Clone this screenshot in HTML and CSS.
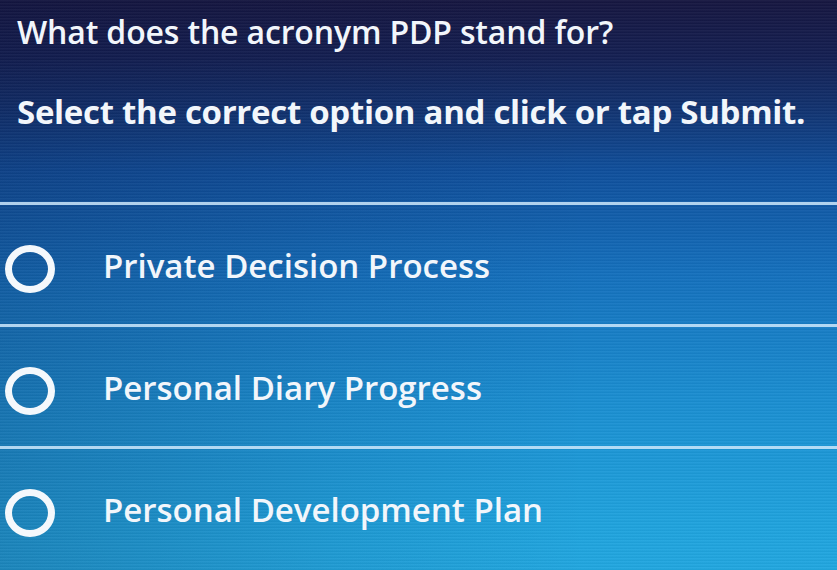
FILE: index.html
```html
<!DOCTYPE html>
<html lang="en">
<head>
<meta charset="utf-8">
<title>Quiz</title>
<link rel="stylesheet" href="styles.css">
</head>
<body>
<main class="quiz">
  <header class="head">
    <h1 class="question">What does the acronym PDP stand for?</h1>
    <p class="instruction">Select the correct option and click or tap Submit.</p>
  </header>
  <ul class="options">
    <li class="option"><span class="radio"></span><span class="label">Private Decision Process</span></li>
    <li class="option"><span class="radio"></span><span class="label">Personal Diary Progress</span></li>
    <li class="option"><span class="radio"></span><span class="label">Personal Development Plan</span></li>
  </ul>
</main>
</body>
</html>
```

FILE: styles.css
```css
html, body {
  margin: 0;
  padding: 0;
  height: 100%;
}
body {
  font-family: "Open Sans", "Noto Sans", sans-serif;
  color: #f2f6fb;
  background:
    repeating-linear-gradient(180deg, rgba(255,255,255,0.04) 0px, rgba(255,255,255,0.04) 1px, rgba(0,0,0,0.035) 2px, rgba(0,0,0,0.035) 3px),
    linear-gradient(90deg, rgba(8,16,60,0.22) 0%, rgba(8,16,60,0.08) 40%, rgba(8,16,60,0) 70%),
    linear-gradient(180deg, #161640 0%, #141f52 10%, #12306c 18%, #0f4f9c 30%, #1470bd 48%, #1a8ed1 70%, #1fa3de 92%, #21a7e0 100%);
  overflow: hidden;
}
.quiz {
  display: flex;
  flex-direction: column;
  height: 570px;
}
.head {
  padding: 10px 0 0 17px;
  height: 202px;
  box-sizing: border-box;
}
.question {
  margin: 0;
  font-size: 32px;
  font-weight: 600;
  line-height: 44px;
  letter-spacing: -0.15px;
}
.instruction {
  margin: 36px 0 0 0;
  font-size: 33px;
  font-weight: 700;
  line-height: 44px;
  letter-spacing: -0.3px;
}
.options {
  list-style: none;
  margin: 0;
  padding: 0;
}
.option {
  display: flex;
  align-items: center;
  gap: 48px;
  height: 122px;
  padding: 8px 0 0 5px;
  border-top: 3px solid rgba(205, 232, 252, 0.85);
  box-sizing: border-box;
}
.radio {
  width: 36px;
  height: 34px;
  border: 7px solid #f4f8fc;
  border-radius: 50%;
  flex: none;
}
.label {
  font-size: 33px;
  font-weight: 600;
  letter-spacing: 0;
  margin-top: -6px;
}
```
